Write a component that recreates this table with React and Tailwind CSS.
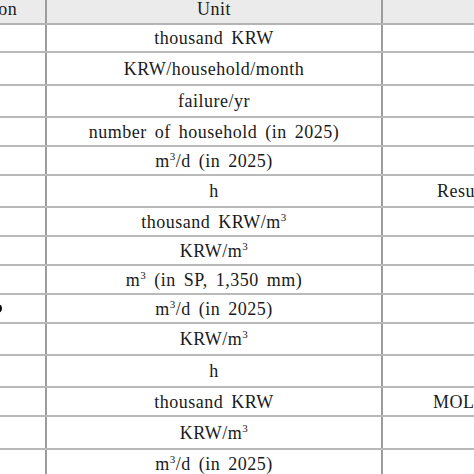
import React from 'react';

const M3 = () => (
  <>
    m<sup className="text-[11px] top-[-7px]">3</sup>
  </>
);

const ROWS = [
  { h: 28, unit: <>thousand KRW</> },
  { h: 33, unit: <>KRW/household/month</> },
  { h: 32, unit: <>failure/yr</> },
  { h: 29, unit: <>number of household (in 2025)</> },
  { h: 29, unit: <><M3 />/d (in 2025)</> },
  { h: 32, unit: <>h</>, source: 'Results of the survey', pad: 'pl-[54px]' },
  { h: 29, unit: <>thousand KRW/<M3 /></> },
  { h: 29, unit: <>KRW/<M3 /></> },
  { h: 29, unit: <><M3 /> (in SP, 1,350 mm)</> },
  { h: 29, unit: <><M3 />/d (in 2025)</>, mark: true },
  { h: 32, unit: <>KRW/<M3 /></> },
  { h: 32, unit: <>h</> },
  { h: 29, unit: <>thousand KRW</>, source: 'MOLIT (2020)', pad: 'pl-[50px]' },
  { h: 33, unit: <>KRW/<M3 /></> },
  { h: 30, unit: <><M3 />/d (in 2025)</> },
];

export default function App() {
  return (
    <div
      className="w-[474px] h-[474px] overflow-hidden bg-white text-[#1a1a1a] text-[18px] tracking-[0.5px] [word-spacing:3px] leading-none"
      style={{ fontFamily: '"Liberation Serif", "DejaVu Serif", serif' }}
    >
      <div className="ml-[-90px] w-[800px]">
        {/* header */}
        <div className="flex h-[25px] bg-[#ebebeb] border-b-2 border-[#b4b4b4]">
          <div className="w-[137px] shrink-0 border-r-2 border-[#9c9c9c] flex items-center justify-center pb-[5px] pr-[10px]">
            Description
          </div>
          <div className="w-[336px] shrink-0 border-r-2 border-[#9c9c9c] flex items-center justify-center pb-[5px]">
            Unit
          </div>
          <div className="flex-1" />
        </div>

        {ROWS.map((row, i) => (
          <div
            key={i}
            className="flex border-b-2 border-[#b9b9b9]"
            style={{ height: row.h }}
          >
            <div className="w-[137px] shrink-0 border-r-2 border-[#9c9c9c] flex items-center justify-center">
              {row.mark && (
                <span className="flex items-center pl-[40px]">
                  <span className="inline-block w-[9px] h-[9px] rounded-full bg-black" />
                </span>
              )}
            </div>
            <div className="w-[336px] shrink-0 border-r-2 border-[#9c9c9c] flex items-center justify-center whitespace-nowrap">
              <span>{row.unit}</span>
            </div>
            <div className={`flex-1 flex items-center whitespace-nowrap ${row.pad || ''}`}>
              {row.source}
            </div>
          </div>
        ))}
      </div>
    </div>
  );
}
